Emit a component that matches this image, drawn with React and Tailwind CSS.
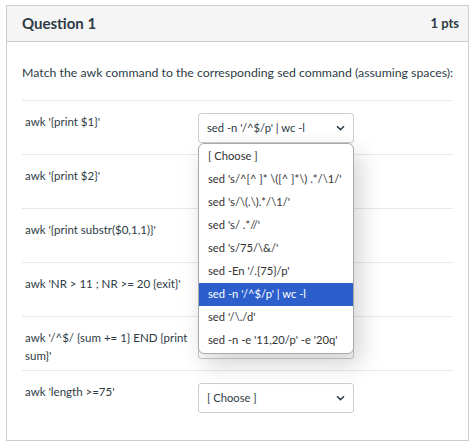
import React from "react";

const rows = [
  { label: "awk '{print $1}'", value: "sed -n '/^$/p' | wc -l", open: true },
  { label: "awk '{print $2}'", value: "" },
  { label: "awk '{print substr($0,1,1)}'", value: "" },
  { label: "awk 'NR > 11 ; NR >= 20 {exit}'", value: "" },
  { label: "awk '/^$/ {sum += 1} END {print sum}'", value: "" },
  { label: "awk 'length >=75'", value: "[ Choose ]" },
];

const options = [
  "[ Choose ]",
  "sed 's/^[^ ]* \\([^ ]*\\) .*/\\1/'",
  "sed 's/\\(.\\).*/\\1/'",
  "sed 's/ .*//'",
  "sed 's/75/\\&/'",
  "sed -En '/.{75}/p'",
  "sed -n '/^$/p' | wc -l",
  "sed '/\\./d'",
  "sed -n -e '11,20/p' -e '20q'",
];

function Chevron() {
  return (
    <svg width="9" height="6" viewBox="0 0 9 6" fill="none">
      <path d="M1 1.2 4.5 4.6 8 1.2" stroke="#2d3b45" strokeWidth="1.5" />
    </svg>
  );
}

function Select({ value, open }) {
  return (
    <div className="relative">
      <div className="flex h-[30px] w-[156px] items-center justify-between rounded-[3px] border border-[#c7cdd1] bg-white pl-[8px] pr-[8px] text-[11.2px] text-[#2d3b45]">
        <span>{value}</span>
        <Chevron />
      </div>
      {open && (
        <div className="absolute left-0 top-[30px] z-10 w-[156px] rounded-[6px] border border-[#a9a9a9] bg-white py-[1px] shadow-[6px_10px_24px_rgba(0,0,0,0.18)]">
          {options.map((o, i) => (
            <div
              key={i}
              className={
                i === 6
                  ? "flex h-[23px] items-center whitespace-nowrap bg-[#2d5fcc] px-[9px] text-[11.2px] text-white"
                  : "flex h-[23px] items-center whitespace-nowrap px-[9px] text-[11.2px] text-[#333]"
              }
            >
              {o}
            </div>
          ))}
        </div>
      )}
    </div>
  );
}

export default function App() {
  return (
    <div className="min-h-screen bg-white pl-[6px] pt-[5px] font-['Lato','Liberation_Sans',sans-serif]">
      <div className="h-[436px] w-[463px] border border-[#c7cdd1]">
        <div className="flex h-[36px] items-center justify-between border-b border-[#c7cdd1] bg-[#f5f5f5] pl-[15px] pr-[9px]">
          <h2 className="text-[15px] font-bold text-[#2d3b45]">Question 1</h2>
          <span className="text-[13px] font-bold text-[#2d3b45]">1 pts</span>
        </div>
        <div className="px-[15px]">
          <p className="whitespace-nowrap border-b border-[#e6e8ea] pb-[17px] pt-[21px] text-[12.3px] leading-[20px] text-[#2d3b45]">
            Match the awk command to the corresponding sed command (assuming spaces):
          </p>
          {rows.map((r, i) => (
            <div
              key={i}
              className={
                i < rows.length - 1
                  ? "flex h-[54px] items-start border-b border-[#e6e8ea] pt-[12px]"
                  : "flex h-[54px] items-start pt-[12px]"
              }
            >
              <div className="w-[176px] pl-[3px] pr-[8px] text-[11.5px] leading-[18px] text-[#2d3b45]">
                {r.label}
              </div>
              <Select value={r.value} open={r.open} />
            </div>
          ))}
        </div>
      </div>
    </div>
  );
}
